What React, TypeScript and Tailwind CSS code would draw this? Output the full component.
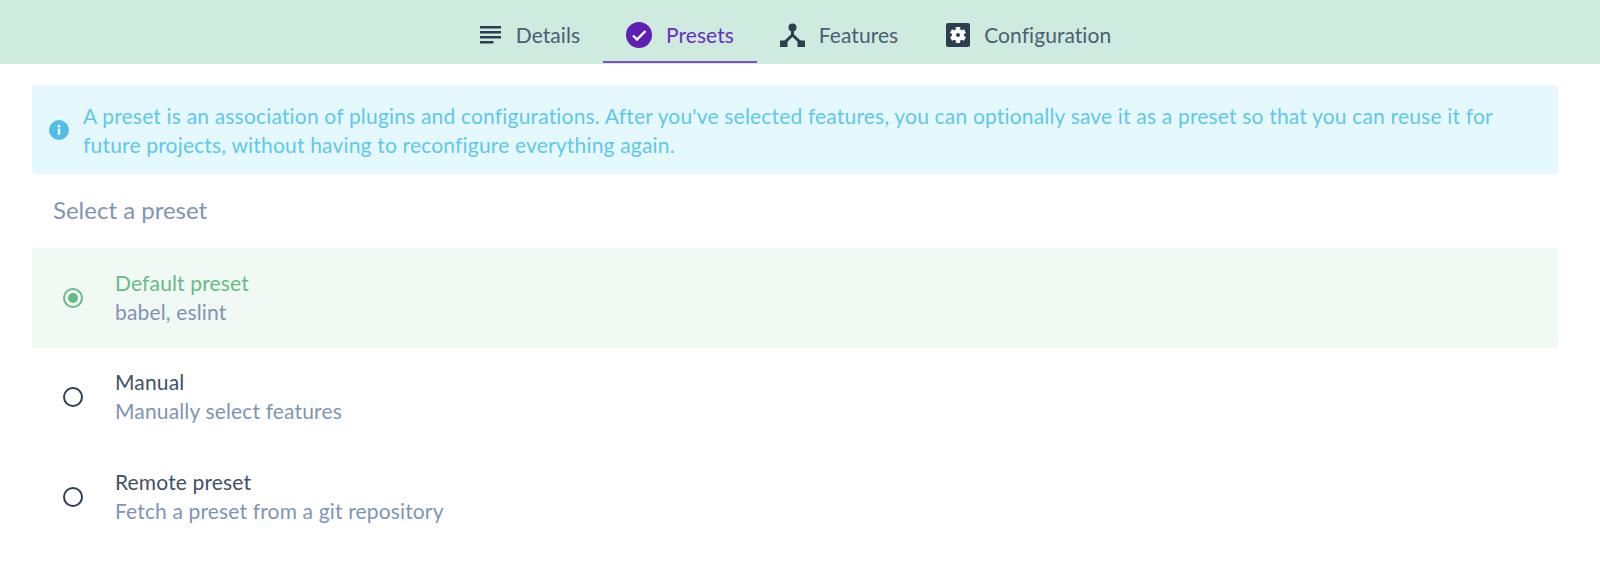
import React from 'react';

function DetailsIcon() {
  return (
    <svg viewBox="0 0 21 18" className="mr-px h-[18px] w-[21px] text-[#2c3e50]" fill="currentColor">
      <path d="M0 0h21v2.6H0zM0 5h21v2.6H0zM0 10h21v2.6H0zM0 15h13.5v2.6H0z" />
    </svg>
  );
}

function PresetsIcon() {
  return (
    <svg viewBox="0 0 26 26" className="h-[26px] w-[26px]">
      <circle cx="13" cy="13" r="13" fill="#5f1eb4" />
      <path d="M7 13.5l4 4 8.5-8.5" fill="none" stroke="#fff" strokeWidth="2.4" />
    </svg>
  );
}

function FeaturesIcon() {
  return (
    <svg viewBox="0 0 25 24" className="h-6 w-[25px] text-[#2c3e50]" fill="currentColor">
      <circle cx="12.5" cy="4.5" r="4" />
      <path d="M11 7h3v6h-3z" />
      <path d="M12.5 12L5 19M12.5 12l7.5 7" stroke="currentColor" strokeWidth="3" fill="none" />
      <path d="M0 17.5h7.5V24H0zM17.5 17.5H25V24h-7.5z" />
    </svg>
  );
}

function ConfigIcon() {
  return (
    <svg viewBox="0 0 24 24" className="ml-[2px] h-6 w-6">
      <rect width="24" height="24" rx="2" fill="#2c3e50" />
      <g fill="#fff">
        <circle cx="12" cy="12" r="6" />
        <rect x="9.8" y="4" width="4.4" height="16" rx=".6" />
        <rect x="9.8" y="4" width="4.4" height="16" rx=".6" transform="rotate(60 12 12)" />
        <rect x="9.8" y="4" width="4.4" height="16" rx=".6" transform="rotate(120 12 12)" />
      </g>
      <circle cx="12" cy="12" r="2" fill="#2c3e50" />
    </svg>
  );
}

function Tab({ icon, label, active, textClass }: { icon: React.ReactNode; label: string; active?: boolean; textClass: string }) {
  return (
    <div className={`flex h-[63px] items-center gap-[14px] border-b-2 px-[23px] pt-[9px] ${active ? 'border-[#7f4fc9]' : 'border-transparent'} ${textClass}`}>
      {icon}
      <span className="text-[21px] tracking-[0.05px]">{label}</span>
    </div>
  );
}

function Radio({ selected }: { selected?: boolean }) {
  if (selected) {
    return (
      <div className="flex h-5 w-5 items-center justify-center rounded-full border-2 border-[#66bb85]">
        <div className="h-[10px] w-[10px] rounded-full bg-[#66bb85]" />
      </div>
    );
  }
  return <div className="h-5 w-5 rounded-full border-2 border-[#2c3e50]" />;
}

function PresetRow({ name, desc, selected, className = '' }: { name: string; desc: string; selected?: boolean; className?: string }) {
  return (
    <div className={`flex items-center gap-[32px] pl-[31px] ${selected ? 'h-[100px] bg-[#f1f9f5]' : 'h-[99px]'} ${className}`}>
      <Radio selected={selected} />
      <div className="pb-[2px] text-[21px] leading-[29px] tracking-[0.15px]">
        <div className={selected ? 'text-[#66bb85]' : 'text-[#3f5266]'}>{name}</div>
        <div className="text-[#7f94b4]">{desc}</div>
      </div>
    </div>
  );
}

export default function App() {
  return (
    <div className="h-[584px] bg-white font-['Lato',sans-serif]">
      <nav className="flex h-16 justify-center bg-[#cfeadf] pr-[9px]">
        <Tab icon={<DetailsIcon />} label="Details" textClass="text-[#4a5f72]" />
        <Tab icon={<PresetsIcon />} label="Presets" active textClass="text-[#6a2fc0]" />
        <Tab icon={<FeaturesIcon />} label="Features" textClass="text-[#4a5f72]" />
        <Tab icon={<ConfigIcon />} label="Configuration" textClass="text-[#4a5f72]" />
      </nav>
      <main className="mx-8 mt-[21px] mr-[42px]">
        <div className="flex h-[89px] items-center gap-[14px] rounded bg-[#e5f8fe] pl-[17px] text-[21px] leading-[29px] tracking-[0.18px] text-[#5ec8ea]">
          <svg viewBox="0 0 20 20" className="h-5 w-5 shrink-0">
            <circle cx="10" cy="10" r="10" fill="#52bde6" />
            <rect x="8.8" y="8.6" width="2.4" height="6" fill="#fff" />
            <circle cx="10" cy="6.2" r="1.4" fill="#fff" />
          </svg>
          <div className="max-w-[1420px]">
            A preset is an association of plugins and configurations. After you've selected features, you can optionally save it as a preset so that you can reuse it for future projects, without having to reconfigure everything again.
          </div>
        </div>
        <div className="flex h-[74px] items-center pb-[2px] pl-[21px] text-[24px] text-[#7f94b4]">Select a preset</div>
        <PresetRow name="Default preset" desc="babel, eslint" selected />
        <PresetRow name="Manual" desc="Manually select features" className="pb-[2px]" />
        <PresetRow name="Remote preset" desc="Fetch a preset from a git repository" />
      </main>
    </div>
  );
}
